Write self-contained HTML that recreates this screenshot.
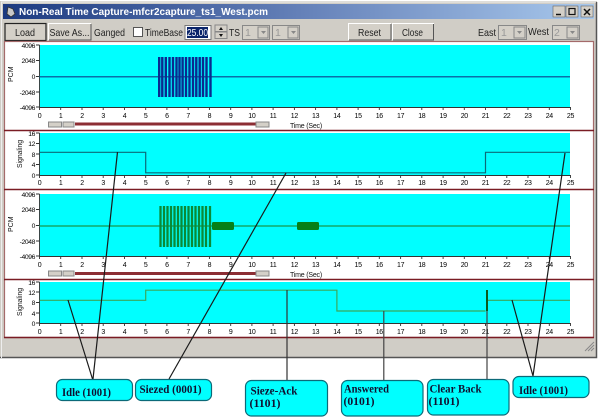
<!DOCTYPE html>
<html><head><meta charset="utf-8"><style>
html,body{margin:0;padding:0;background:#fff}
svg{display:block}
text{font-family:"Liberation Sans",sans-serif}
.t text{font-size:7px;text-anchor:middle;fill:#000;letter-spacing:-.3px}
.y text{font-size:6.8px;text-anchor:end;fill:#000;letter-spacing:-.4px}
.u{font-size:10.5px;fill:#222}
.c{font-family:"Liberation Serif",serif;font-weight:bold;font-size:11.5px;fill:#101030}
.btn{fill:#d4d0c8;stroke:#888;stroke-width:1}
</style></head><body>
<svg width="600" height="418" viewBox="0 0 600 418" xmlns="http://www.w3.org/2000/svg">
<defs>
<linearGradient id="g" x1="0" x2="1" y1="0" y2="0"><stop offset="0" stop-color="#1c3a80"/><stop offset=".5" stop-color="#6480b8"/><stop offset="1" stop-color="#a8c8ec"/></linearGradient>
</defs>
<rect width="600" height="418" fill="#fff"/>
<!-- window -->
<rect x="0" y="1" width="597" height="357" fill="#d0cdc6"/>
<path d="M596.500 2V357.500H0" fill="none" stroke="#555" stroke-width="1.500"/>
<path d="M1.500 358V2H596" fill="none" stroke="#eee" stroke-width="1"/>
<rect x="3" y="4" width="591" height="15" fill="url(#g)"/>
<path d="M8 7l5 2 2 5-4 3-4-3z" fill="#c8c8c8" stroke="#333" stroke-width=".8"/>
<text x="19" y="15" font-weight="bold" fill="#fff" style="font-size:10.500px" textLength="249" lengthAdjust="spacingAndGlyphs">Non-Real Time Capture-mfcr2capture_ts1_West.pcm</text>
<!-- caption buttons -->
<rect x="553" y="6" width="12" height="11" fill="#d4d0c8" stroke="#666" stroke-width=".6"/>
<rect x="566" y="6" width="12" height="11" fill="#d4d0c8" stroke="#666" stroke-width=".6"/>
<rect x="581" y="6" width="12" height="11" fill="#d4d0c8" stroke="#666" stroke-width=".6"/>
<path d="M556 14.500h5" stroke="#111" stroke-width="1.500"/>
<rect x="569" y="8.500" width="6" height="6" fill="none" stroke="#111" stroke-width="1.200"/>
<path d="M584 9l6 6M590 9l-6 6" stroke="#111" stroke-width="1.500"/>
<!-- toolbar -->
<rect x="5" y="23.500" width="41" height="17" fill="#d4d0c8" stroke="#222" stroke-width="1.200"/>
<text x="15" y="36" class="u" textLength="20" lengthAdjust="spacingAndGlyphs">Load</text>
<rect x="48" y="23" width="43" height="17" fill="#d4d0c8"/>
<path d="M48.500 40V23.500H91" fill="none" stroke="#fff"/><path d="M91 24V40H49" fill="none" stroke="#555"/>
<text x="49.500" y="36" class="u" textLength="40" lengthAdjust="spacingAndGlyphs">Save As...</text>
<text x="94" y="36" class="u" textLength="31" lengthAdjust="spacingAndGlyphs">Ganged</text>
<rect x="133.500" y="27.500" width="9" height="9" fill="#fff" stroke="#555"/>
<text x="145" y="36" class="u" textLength="38" lengthAdjust="spacingAndGlyphs">TimeBase</text>
<rect x="185" y="25.500" width="26" height="14" fill="#fff" stroke="#777"/>
<rect x="187" y="27" width="21" height="11" fill="#0a246a"/>
<text x="187" y="36" class="u" style="fill:#fff" textLength="21" lengthAdjust="spacingAndGlyphs">25.00</text>
<rect x="215" y="25" width="12" height="6.500" class="btn"/><rect x="215" y="32" width="12" height="6.500" class="btn"/>
<path d="M219 30l2-3 2 3zM219 34l2 3 2-3z" fill="#111"/>
<text x="229" y="36" class="u" textLength="11" lengthAdjust="spacingAndGlyphs">TS</text>
<rect x="242.500" y="25.500" width="27" height="14" fill="#d4d0c8" stroke="#888"/>
<rect x="258" y="27" width="10" height="11" class="btn"/>
<path d="M261 31h5l-2.500 3z" fill="#888"/>
<text x="245" y="36" class="u" style="fill:#999">1</text>
<rect x="272.500" y="25.500" width="27" height="14" fill="#d4d0c8" stroke="#888"/>
<rect x="288" y="27" width="10" height="11" class="btn"/>
<path d="M291 31h5l-2.500 3z" fill="#888"/>
<text x="275" y="36" class="u" style="fill:#999">1</text>
<rect x="348" y="23" width="43" height="17" fill="#d4d0c8"/>
<path d="M348.500 40V23.500H391" fill="none" stroke="#fff"/><path d="M391 24V40H349" fill="none" stroke="#555"/>
<text x="358" y="36" class="u" textLength="23" lengthAdjust="spacingAndGlyphs">Reset</text>
<rect x="392" y="23" width="42" height="17" fill="#d4d0c8"/>
<path d="M392.500 40V23.500H434" fill="none" stroke="#fff"/><path d="M433.500 24V40H393" fill="none" stroke="#555"/>
<text x="402" y="36" class="u" textLength="21" lengthAdjust="spacingAndGlyphs">Close</text>
<text x="478" y="36" class="u" textLength="18" lengthAdjust="spacingAndGlyphs">East</text>
<rect x="498.500" y="25.500" width="28" height="14" fill="#d4d0c8" stroke="#888"/>
<rect x="514" y="27" width="11" height="11" class="btn"/>
<path d="M517 31h5l-2.500 3z" fill="#888"/>
<text x="501" y="36" class="u" style="fill:#999">1</text>
<text x="528" y="35" class="u" textLength="21" lengthAdjust="spacingAndGlyphs">West</text>
<rect x="552.500" y="25.500" width="27" height="14" fill="#d4d0c8" stroke="#888"/>
<rect x="567" y="27" width="11" height="11" class="btn"/>
<path d="M570 31h5l-2.500 3z" fill="#888"/>
<text x="554" y="36" class="u" style="fill:#999">2</text>
<!-- white panel -->
<rect x="4.500" y="41.500" width="589" height="296" fill="#fff" stroke="#a46a6a" stroke-width="1.200"/>
<path d="M4 130.500H594M4 189.500H594M4 279.500H594M4 337.500H594" stroke="#7a1c24" stroke-width="1.400"/>
<!-- plots -->
<rect x="39.500" y="45" width="530.500" height="62" fill="#0ff"/>
<rect x="39.500" y="133" width="530.500" height="42" fill="#0ff"/>
<rect x="39.500" y="194" width="530.500" height="62" fill="#0ff"/>
<rect x="39.500" y="282" width="530.500" height="41" fill="#0ff"/>
<!-- axes -->
<g fill="none" stroke="#333" stroke-width=".9">
<path d="M39.500 45V107.500H570.500M36 45h3.500M36 60.500h3.500M36 76.500h3.500M36 92h3.500M36 107h3.500M39.500 107v3M60.700 107v3M82 107v3M103.200 107v3M124.500 107v3M145.700 107v3M166.900 107v3M188.200 107v3M209.400 107v3M230.700 107v3M251.900 107v3M273.100 107v3M294.400 107v3M315.600 107v3M336.900 107v3M358.100 107v3M379.300 107v3M400.600 107v3M421.800 107v3M443.100 107v3M464.300 107v3M485.500 107v3M506.800 107v3M528 107v3M549.300 107v3M570.500 107v3"/>
<path d="M39.500 133V175.500H570.500M36 133h3.500M36 143.500h3.500M36 154h3.500M36 164.500h3.500M36 175h3.500M39.500 175v3M60.700 175v3M82 175v3M103.200 175v3M124.500 175v3M145.700 175v3M166.900 175v3M188.200 175v3M209.400 175v3M230.700 175v3M251.900 175v3M273.100 175v3M294.400 175v3M315.600 175v3M336.900 175v3M358.100 175v3M379.300 175v3M400.600 175v3M421.800 175v3M443.100 175v3M464.300 175v3M485.500 175v3M506.800 175v3M528 175v3M549.300 175v3M570.500 175v3"/>
<path d="M39.500 194V256.500H570.500M36 194h3.500M36 209.500h3.500M36 225.500h3.500M36 241h3.500M36 256h3.500M39.500 256v3M60.700 256v3M82 256v3M103.200 256v3M124.500 256v3M145.700 256v3M166.900 256v3M188.200 256v3M209.400 256v3M230.700 256v3M251.900 256v3M273.100 256v3M294.400 256v3M315.600 256v3M336.900 256v3M358.100 256v3M379.300 256v3M400.600 256v3M421.800 256v3M443.100 256v3M464.300 256v3M485.500 256v3M506.800 256v3M528 256v3M549.300 256v3M570.500 256v3"/>
<path d="M39.500 282V323.500H570.500M36 282h3.500M36 292h3.500M36 302.500h3.500M36 313h3.500M36 323h3.500M39.500 323v3M60.700 323v3M82 323v3M103.200 323v3M124.500 323v3M145.700 323v3M166.900 323v3M188.200 323v3M209.400 323v3M230.700 323v3M251.900 323v3M273.100 323v3M294.400 323v3M315.600 323v3M336.900 323v3M358.100 323v3M379.300 323v3M400.600 323v3M421.800 323v3M443.100 323v3M464.300 323v3M485.500 323v3M506.800 323v3M528 323v3M549.300 323v3M570.500 323v3"/>
</g>
<!-- y labels -->
<g class="y">
<text x="35" y="48">4096</text><text x="35" y="63">2048</text><text x="35" y="79">0</text><text x="35" y="95">-2048</text><text x="35" y="110">-4096</text>
<text x="35" y="136">16</text><text x="35" y="146">12</text><text x="35" y="157">8</text><text x="35" y="167">4</text><text x="35" y="178">0</text>
<text x="35" y="197">4096</text><text x="35" y="212">2048</text><text x="35" y="228">0</text><text x="35" y="244">-2048</text><text x="35" y="259">-4096</text>
<text x="35" y="285">16</text><text x="35" y="295">12</text><text x="35" y="305">8</text><text x="35" y="316">4</text><text x="35" y="326">0</text>
</g>
<text transform="translate(13,82) rotate(-90)" style="font-size:7px" fill="#111">PCM</text>
<text transform="translate(22,168) rotate(-90)" style="font-size:7.500px" fill="#111" textLength="28" lengthAdjust="spacingAndGlyphs">Signaling</text>
<text transform="translate(13,232) rotate(-90)" style="font-size:7px" fill="#111">PCM</text>
<text transform="translate(22,316) rotate(-90)" style="font-size:7.500px" fill="#111" textLength="28" lengthAdjust="spacingAndGlyphs">Signaling</text>
<!-- x labels -->
<g class="t"><text x="39.500" y="118">0</text><text x="60.700" y="118">1</text><text x="82" y="118">2</text><text x="103.200" y="118">3</text><text x="124.500" y="118">4</text><text x="145.700" y="118">5</text><text x="166.900" y="118">6</text><text x="188.200" y="118">7</text><text x="209.400" y="118">8</text><text x="230.700" y="118">9</text><text x="251.900" y="118">10</text><text x="273.100" y="118">11</text><text x="294.400" y="118">12</text><text x="315.600" y="118">13</text><text x="336.900" y="118">14</text><text x="358.100" y="118">15</text><text x="379.300" y="118">16</text><text x="400.600" y="118">17</text><text x="421.800" y="118">18</text><text x="443.100" y="118">19</text><text x="464.300" y="118">20</text><text x="485.500" y="118">21</text><text x="506.800" y="118">22</text><text x="528" y="118">23</text><text x="549.300" y="118">24</text><text x="570.500" y="118">25</text></g>
<g class="t"><text x="39.500" y="185">0</text><text x="60.700" y="185">1</text><text x="82" y="185">2</text><text x="103.200" y="185">3</text><text x="124.500" y="185">4</text><text x="145.700" y="185">5</text><text x="166.900" y="185">6</text><text x="188.200" y="185">7</text><text x="209.400" y="185">8</text><text x="230.700" y="185">9</text><text x="251.900" y="185">10</text><text x="273.100" y="185">11</text><text x="294.400" y="185">12</text><text x="315.600" y="185">13</text><text x="336.900" y="185">14</text><text x="358.100" y="185">15</text><text x="379.300" y="185">16</text><text x="400.600" y="185">17</text><text x="421.800" y="185">18</text><text x="443.100" y="185">19</text><text x="464.300" y="185">20</text><text x="485.500" y="185">21</text><text x="506.800" y="185">22</text><text x="528" y="185">23</text><text x="549.300" y="185">24</text><text x="570.500" y="185">25</text></g>
<g class="t"><text x="39.500" y="267">0</text><text x="60.700" y="267">1</text><text x="82" y="267">2</text><text x="103.200" y="267">3</text><text x="124.500" y="267">4</text><text x="145.700" y="267">5</text><text x="166.900" y="267">6</text><text x="188.200" y="267">7</text><text x="209.400" y="267">8</text><text x="230.700" y="267">9</text><text x="251.900" y="267">10</text><text x="273.100" y="267">11</text><text x="294.400" y="267">12</text><text x="315.600" y="267">13</text><text x="336.900" y="267">14</text><text x="358.100" y="267">15</text><text x="379.300" y="267">16</text><text x="400.600" y="267">17</text><text x="421.800" y="267">18</text><text x="443.100" y="267">19</text><text x="464.300" y="267">20</text><text x="485.500" y="267">21</text><text x="506.800" y="267">22</text><text x="528" y="267">23</text><text x="549.300" y="267">24</text><text x="570.500" y="267">25</text></g>
<g class="t"><text x="39.500" y="334">0</text><text x="60.700" y="334">1</text><text x="82" y="334">2</text><text x="103.200" y="334">3</text><text x="124.500" y="334">4</text><text x="145.700" y="334">5</text><text x="166.900" y="334">6</text><text x="188.200" y="334">7</text><text x="209.400" y="334">8</text><text x="230.700" y="334">9</text><text x="251.900" y="334">10</text><text x="273.100" y="334">11</text><text x="294.400" y="334">12</text><text x="315.600" y="334">13</text><text x="336.900" y="334">14</text><text x="358.100" y="334">15</text><text x="379.300" y="334">16</text><text x="400.600" y="334">17</text><text x="421.800" y="334">18</text><text x="443.100" y="334">19</text><text x="464.300" y="334">20</text><text x="485.500" y="334">21</text><text x="506.800" y="334">22</text><text x="528" y="334">23</text><text x="549.300" y="334">24</text><text x="570.500" y="334">25</text></g>
<text x="290" y="128" style="font-size:7px;letter-spacing:-.2px" fill="#111">Time (Sec)</text>
<text x="290" y="277" style="font-size:7px;letter-spacing:-.2px" fill="#111">Time (Sec)</text>
<!-- scrollbars -->
<g>
<rect x="75" y="122.500" width="181" height="3" fill="#8c2e34"/>
<rect x="48.500" y="122" width="13" height="5" class="btn" stroke-width=".6"/><rect x="63" y="122" width="11" height="5" class="btn" stroke-width=".6"/><rect x="256" y="122" width="13" height="5" class="btn" stroke-width=".6"/>
<rect x="75" y="272" width="181" height="3" fill="#8c2e34"/>
<rect x="48.500" y="271" width="13" height="5" class="btn" stroke-width=".6"/><rect x="63" y="271" width="11" height="5" class="btn" stroke-width=".6"/><rect x="256" y="271" width="13" height="5" class="btn" stroke-width=".6"/>
</g>
<!-- traces -->
<path d="M39.500 76.800H570" stroke="#0a70a8" stroke-width="1.500"/>
<path d="M159.200 57v40M162.300 57v40M165.800 57v40M169.500 57v40M173 57v40M176.500 57v40M179.500 57v40M182.600 57v40M186 57v40M189.500 57v40M193 57v40M196.300 57v40M199.700 57v40M203 57v40M206.500 57v40M210.500 57v40" stroke="#0a2a90" stroke-width="2.400"/>
<path d="M39.500 152.300H145.700V172.800H485.500V152.300H570" fill="none" stroke="#0b6a78" stroke-width="1.200"/>
<path d="M39.500 226H570" stroke="#14a868" stroke-width="1.500"/>
<path d="M160.500 206v41M164 206v41M167.500 206v41M171 206v41M174.500 206v41M178 206v41M181.500 206v41M185 206v41M188.500 206v41M192 206v41M195.500 206v41M199 206v41M202.500 206v41M206 206v41M210 206v41" stroke="#0a8a36" stroke-width="2.300"/>
<rect x="212" y="222" width="22" height="8" rx="1.500" fill="#068018"/>
<rect x="297" y="222" width="22" height="8" rx="1.500" fill="#068018"/>
<path d="M39.500 300.300H145.700V290.200H336.900V311H485.500M488 300.300H570" fill="none" stroke="#3aa85c" stroke-width="1.200"/>
<path d="M487 290V311" stroke="#0a5a1c" stroke-width="2"/>
<!-- resize grip -->
<path d="M585 351l9-9M588 351l6-6M591 351l3-3" stroke="#888" stroke-width="1"/>
<!-- callout lines -->
<g stroke="#1a1a1a" stroke-width="1.200" fill="none">
<path d="M117.500 152L93 379M68 300L92.500 379"/>
<path d="M286 173L169 379"/>
<path d="M287 290V381" stroke="#333"/>
<path d="M383.800 311V381" stroke="#444"/>
<path d="M487 311V380" stroke="#444"/>
<path d="M512 300L533 376M565 153L533 376"/>
<path d="M524 377.500H533"/>
</g>
<!-- callouts -->
<g fill="#0ff" stroke="#0c6a78" stroke-width="1.200">
<rect x="56.500" y="379.500" width="76" height="21" rx="6"/>
<rect x="135.500" y="379.500" width="76" height="21" rx="6"/>
<rect x="245.500" y="380.500" width="82" height="35.500" rx="6"/>
<rect x="341.500" y="380.500" width="81.500" height="35.500" rx="6"/>
<rect x="427.500" y="379.500" width="81.500" height="35.500" rx="6"/>
<rect x="513" y="376.500" width="76" height="21" rx="6"/>
</g>
<text x="62" y="396" class="c" textLength="49" lengthAdjust="spacingAndGlyphs">Idle (1001)</text>
<text x="139.500" y="393" class="c" textLength="62" lengthAdjust="spacingAndGlyphs">Siezed (0001)</text>
<text x="250.500" y="394.500" class="c" textLength="47" lengthAdjust="spacingAndGlyphs">Sieze-Ack</text>
<text x="249.500" y="407" class="c" textLength="31" lengthAdjust="spacingAndGlyphs">(1101)</text>
<text x="344" y="392.500" class="c" textLength="45" lengthAdjust="spacingAndGlyphs">Answered</text>
<text x="343.500" y="405" class="c" textLength="31" lengthAdjust="spacingAndGlyphs">(0101)</text>
<text x="429.500" y="392.500" class="c" textLength="52" lengthAdjust="spacingAndGlyphs">Clear Back</text>
<text x="428.500" y="405" class="c" textLength="31" lengthAdjust="spacingAndGlyphs">(1101)</text>
<text x="519" y="394" class="c" textLength="49" lengthAdjust="spacingAndGlyphs">Idle (1001)</text>
</svg>
</body></html>
